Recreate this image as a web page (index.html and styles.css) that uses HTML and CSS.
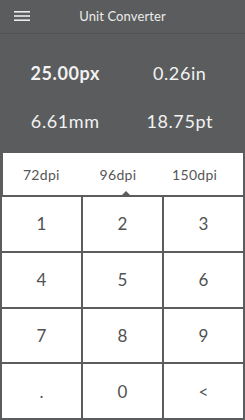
FILE: index.html
```html
<!DOCTYPE html>
<html>
<head>
<meta charset="utf-8">
<link rel="stylesheet" href="styles.css">
</head>
<body>
<div class="app">
  <header class="topbar">
    <svg class="menu" width="16" height="10" viewBox="0 0 16 10">
      <rect x="0" y="0" width="16" height="1.6" fill="#ececec"/>
      <rect x="0" y="4.2" width="16" height="1.6" fill="#ececec"/>
      <rect x="0" y="8.4" width="16" height="1.6" fill="#ececec"/>
    </svg>
    <div class="title">Unit Converter</div>
    <div></div>
  </header>
  <section class="values">
    <div class="val bold">25.00px</div>
    <div class="val">0.26in</div>
    <div class="val">6.61mm</div>
    <div class="val">18.75pt</div>
  </section>
  <nav class="dpi">
    <div class="opt">72dpi</div>
    <div class="opt active">96dpi</div>
    <div class="opt">150dpi</div>
  </nav>
  <section class="keypad">
    <div class="key">1</div>
    <div class="key">2</div>
    <div class="key">3</div>
    <div class="key">4</div>
    <div class="key">5</div>
    <div class="key">6</div>
    <div class="key">7</div>
    <div class="key">8</div>
    <div class="key">9</div>
    <div class="key">.</div>
    <div class="key">0</div>
    <div class="key">&lt;</div>
  </section>
</div>
</body>
</html>
```
FILE: styles.css
```css
* { box-sizing: border-box; }
html, body { margin: 0; padding: 0; }
body {
  background: #5a5c5d;
  font-family: Lato, "Open Sans", sans-serif;
  width: 245px;
  height: 420px;
  overflow: hidden;
}
.app { display: flex; flex-direction: column; height: 420px; }
.topbar {
  height: 34px;
  border-bottom: 1px solid #505253;
  display: grid;
  grid-template-columns: 1fr auto 1fr;
  align-items: center;
}
.menu { margin-left: 14px; margin-top: -1px; }
.title {
  color: #ececec;
  font-size: 13px;
  letter-spacing: 0.1px;
  margin-top: -1px;
}
.values {
  height: 119px;
  padding: 15px 8px 8px;
  display: grid;
  grid-template-columns: 1fr 1fr;
  grid-template-rows: 48px 48px;
  align-items: center;
  justify-items: center;
  color: #f2f2f2;
}
.val { font-size: 18px; letter-spacing: 0.6px; }
.val.bold { font-weight: 700; }
.dpi {
  position: relative;
  height: 42px;
  margin: 0 2px 0 3px;
  background: #fff;
  display: grid;
  grid-template-columns: 1fr 1fr 1fr;
  align-items: center;
  padding-right: 10px;
  color: #555758;
  font-size: 14px;
}
.opt { text-align: center; letter-spacing: 0.3px; }
.dpi::after {
  content: "";
  position: absolute;
  left: 119px;
  bottom: 0;
  border-left: 4px solid transparent;
  border-right: 4px solid transparent;
  border-bottom: 4px solid #5a5c5d;
}
.keypad {
  flex: 1;
  display: grid;
  grid-template-columns: repeat(3, 1fr);
  grid-template-rows: repeat(4, 1fr);
  gap: 2px;
  padding: 2px;
}
.key {
  background: #fff;
  display: flex;
  align-items: center;
  justify-content: center;
  color: #505253;
  font-size: 17px;
}
```
